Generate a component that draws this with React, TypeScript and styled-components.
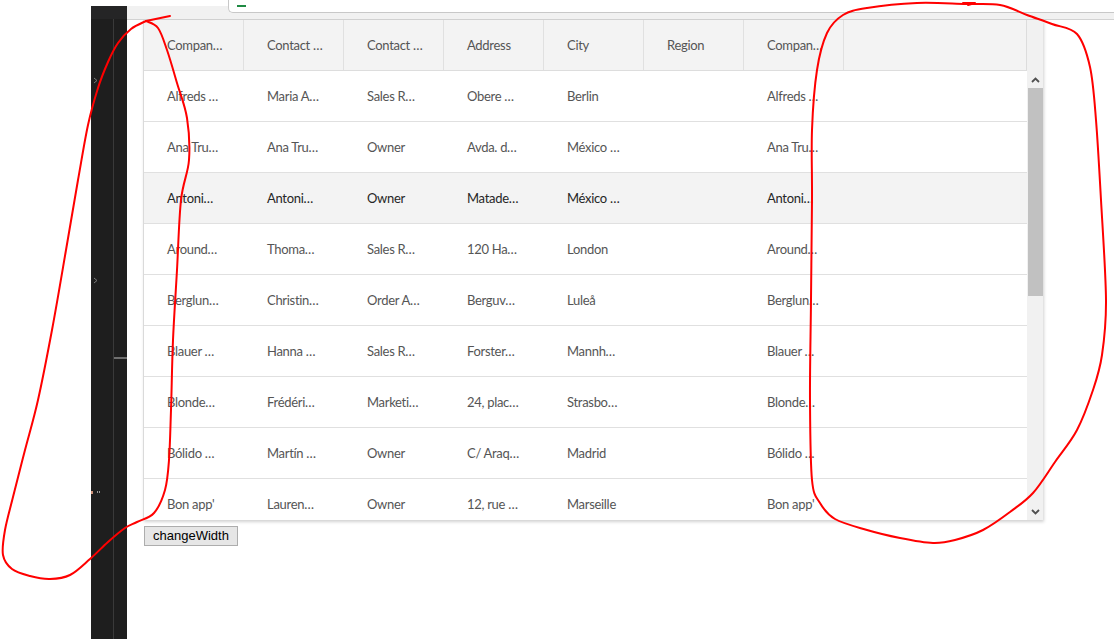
import type { FC } from "react";
import styled, { createGlobalStyle } from "styled-components";

type Point = [number, number];

const GlobalStyle = createGlobalStyle`
  html, body {
    margin: 0;
    padding: 0;
    background: #ffffff;
    overflow: hidden;
  }
`;

const columns = ["Compan…", "Contact …", "Contact …", "Address", "City", "Region", "Compan…"];

// visible (already truncated) cell texts, as the grid shows them
const rows: string[][] = [
  ["Alfreds …", "Maria A…", "Sales R…", "Obere …", "Berlin", "", "Alfreds …"],
  ["Ana Tru…", "Ana Tru…", "Owner", "Avda. d…", "México …", "", "Ana Tru…"],
  ["Antoni…", "Antoni…", "Owner", "Matade…", "México …", "", "Antoni…"],
  ["Around…", "Thoma…", "Sales R…", "120 Ha…", "London", "", "Around…"],
  ["Berglun…", "Christin…", "Order A…", "Berguv…", "Luleå", "", "Berglun…"],
  ["Blauer …", "Hanna …", "Sales R…", "Forster…", "Mannh…", "", "Blauer …"],
  ["Blonde…", "Frédéri…", "Marketi…", "24, plac…", "Strasbo…", "", "Blonde…"],
  ["Bólido …", "Martín …", "Owner", "C/ Araq…", "Madrid", "", "Bólido …"],
  ["Bon app'", "Lauren…", "Owner", "12, rue …", "Marseille", "", "Bon app'"],
];

const SELECTED_ROW = 2;

const Screen = styled.div`
  position: relative;
  display: flex;
  width: 1114px;
  height: 639px;
  padding-left: 91px;
  box-sizing: border-box;
  font-family: Lato, "Noto Sans", sans-serif;
`;

/* ---------- editor strip on the left ---------- */

const Editor = styled.aside`
  width: 36px;
  flex-shrink: 0;
  padding-top: 6px;
  display: flex;
  flex-direction: column;
`;

const EditorTabs = styled.div`
  height: 13px;
  background: #252526;
`;

const EditorBody = styled.div`
  flex: 1;
  display: flex;
  background: #1e1e1e;
`;

const Gutter = styled.div`
  width: 22px;
  border-right: 1px solid #3a3a3a;
  display: flex;
  flex-direction: column;
`;

const FoldMark = styled.svg<{ $gap: number }>`
  display: block;
  margin: ${(p) => p.$gap}px 0 0 2px;
`;

const CodeBits = styled.div`
  display: flex;
  gap: 4px;
  margin-top: 207px;
  align-items: flex-start;
`;

const OrangeBit = styled.span`
  width: 2px;
  height: 3px;
  background: #ce9178;
`;

const QuoteBit = styled.span`
  width: 3px;
  height: 2px;
  border-left: 1px solid #9a9a9a;
  border-right: 1px solid #9a9a9a;
  box-sizing: border-box;
`;

const Minimap = styled.div`
  flex: 1;
  display: flex;
  flex-direction: column;
`;

const MinimapSlider = styled.div`
  margin-top: 338px;
  height: 2px;
  background: #6f6f6f;
`;

/* ---------- browser ---------- */

const Browser = styled.main`
  flex: 1;
  min-width: 0;
  display: flex;
  flex-direction: column;
`;

const Chrome = styled.header`
  height: 20px;
  box-sizing: border-box;
  display: flex;
  align-items: flex-start;
  background: #f1f1f1;
  border-bottom: 1px solid #d2d2d2;
`;

const ChromeTabs = styled.div`
  width: 101px;
  height: 6px;
  background: #ffffff;
`;

const AddressBar = styled.div`
  flex: 1;
  height: 13px;
  box-sizing: border-box;
  background: #ffffff;
  border-left: 1px solid #c8c8c8;
  border-bottom: 1px solid #c8c8c8;
  border-bottom-left-radius: 5px;
  padding: 5px 0 0 8px;
`;

const Favicon = styled.span`
  display: block;
  width: 9px;
  height: 2px;
  background: #1f8a43;
`;

const Content = styled.div`
  flex: 1;
  padding-left: 16px;
  background: #ffffff;
`;

/* ---------- grid ---------- */

const Grid = styled.section`
  width: 900px;
  height: 500px;
  box-sizing: border-box;
  display: flex;
  background: #ffffff;
  border-left: 1px solid #dadada;
  box-shadow: 1px 2px 3px rgba(0, 0, 0, 0.18);
`;

const GridMain = styled.div`
  flex: 1;
  min-width: 0;
  display: flex;
  flex-direction: column;
`;

const HeaderRow = styled.div`
  display: flex;
  height: 51px;
  flex-shrink: 0;
  box-sizing: border-box;
  background: #f3f3f3;
  border-bottom: 1px solid #dddddd;
`;

const HeaderCell = styled.div`
  width: 100px;
  flex-shrink: 0;
  box-sizing: border-box;
  display: flex;
  align-items: center;
  padding-left: 23px;
  border-right: 1px solid #e0e0e0;
  font-size: 13px;
  letter-spacing: -0.3px;
  color: #555555;
  white-space: nowrap;
  overflow: hidden;
`;

const HeaderFill = styled.div`
  flex: 1;
  border-right: 1px solid #dcdcdc;
`;

const Body = styled.div`
  flex: 1;
  overflow: hidden;
`;

const Row = styled.div<{ $selected: boolean }>`
  display: flex;
  height: 51px;
  box-sizing: border-box;
  border-bottom: 1px solid #e0e0e0;
  background: ${(p) => (p.$selected ? "#f3f3f3" : "#ffffff")};
  color: ${(p) => (p.$selected ? "#262626" : "#555555")};
`;

const Cell = styled.div`
  width: 100px;
  flex-shrink: 0;
  box-sizing: border-box;
  display: flex;
  align-items: center;
  padding-left: 23px;
  font-size: 13px;
  letter-spacing: -0.3px;
  white-space: nowrap;
  overflow: hidden;
  text-overflow: ellipsis;
`;

const ScrollTrack = styled.div`
  width: 16px;
  flex-shrink: 0;
  display: flex;
  flex-direction: column;
  padding-top: 51px;
  box-sizing: border-box;
  background: #f1f1f1;
`;

const ScrollArrow = styled.div`
  height: 17px;
  display: flex;
  align-items: center;
  justify-content: center;
`;

const ScrollThumb = styled.div`
  height: 208px;
  margin-left: 1px;
  background: #c1c1c1;
`;

const ScrollRest = styled.div`
  flex: 1;
`;

const ChangeButton = styled.button`
  margin: 6px 0 0 1px;
  height: 20px;
  padding: 0 8px;
  box-sizing: border-box;
  border: 1px solid #adadad;
  border-radius: 0;
  background: #e6e6e6;
  font-family: "Liberation Sans", Arial, sans-serif;
  font-size: 13px;
  line-height: 16px;
  color: #000000;
`;

/* ---------- red pen marks drawn over the screenshot ---------- */

const Marks = styled.svg`
  position: absolute;
  left: 0;
  top: 0;
  pointer-events: none;
`;

// Catmull-Rom through the points, as cubic Bézier segments
const smooth = (pts: Point[], closed = false): string => {
  const n = pts.length;
  const get = (i: number): Point =>
    closed ? pts[(i + n) % n] : pts[Math.max(0, Math.min(n - 1, i))];
  const last = closed ? n : n - 1;
  let d = `M${pts[0][0]},${pts[0][1]}`;
  for (let i = 0; i < last; i++) {
    const p0 = get(i - 1);
    const p1 = get(i);
    const p2 = get(i + 1);
    const p3 = get(i + 2);
    const c1x = p1[0] + (p2[0] - p0[0]) / 6;
    const c1y = p1[1] + (p2[1] - p0[1]) / 6;
    const c2x = p2[0] - (p3[0] - p1[0]) / 6;
    const c2y = p2[1] - (p3[1] - p1[1]) / 6;
    d += ` C${c1x.toFixed(1)},${c1y.toFixed(1)} ${c2x.toFixed(1)},${c2y.toFixed(1)} ${p2[0]},${p2[1]}`;
  }
  return d;
};

const leftLoop: Point[] = [
  [146, 21], [158, 28], [167, 50], [177, 83], [187, 118], [189, 160], [181, 200],
  [177, 270], [173, 340], [171, 410], [169, 460], [165, 490], [154, 513], [137, 522],
  [125, 528], [108, 542], [90, 559], [70, 575], [50, 579], [30, 576], [12, 569],
  [3, 555], [5, 530], [13, 497], [25, 450], [38, 400], [52, 330], [66, 250],
  [78, 180], [88, 125], [98, 88], [108, 62], [118, 43], [131, 29], [146, 21],
];

const rightLoop: Point[] = [
  [843, 15], [867, 8], [917, 3], [966, 4], [1000, 5], [1027, 15], [1052, 24],
  [1077, 34], [1090, 67], [1096, 120], [1101, 200], [1106, 300], [1102, 355],
  [1093, 390], [1077, 430], [1055, 462], [1033, 493], [1010, 512], [983, 530],
  [955, 540], [933, 543], [900, 538], [867, 530], [835, 519], [820, 503],
  [812, 480], [810, 400], [811, 300], [812, 200], [812, 130], [817, 70], [827, 33],
];

const PenMarks: FC = () => (
  <Marks width={1114} height={639} viewBox="0 0 1114 639">
    <g fill="none" stroke="#ff0000" strokeWidth={2} strokeLinecap="round" strokeLinejoin="round">
      <path d="M170,16 L146,21" />
      <path d={smooth(leftLoop)} />
      <path d={smooth(rightLoop, true)} />
      <path d="M963,3 L975,3 L968,5" />
    </g>
  </Marks>
);

const Chevron: FC<{ up?: boolean }> = ({ up }) => (
  <svg width="9" height="6" viewBox="0 0 9 6">
    <polyline
      points={up ? "1,5 4.5,1.5 8,5" : "1,1 4.5,4.5 8,1"}
      fill="none"
      stroke="#505050"
      strokeWidth={1.8}
    />
  </svg>
);

const Fold: FC<{ gap: number }> = ({ gap }) => (
  <FoldMark $gap={gap} width="6" height="7" viewBox="0 0 6 7">
    <polyline points="1,1 4,3.5 1,6" fill="none" stroke="#7a7a7a" strokeWidth={1} />
  </FoldMark>
);

const App: FC = () => (
  <>
    <GlobalStyle />
    <Screen>
      <Editor>
        <EditorTabs />
        <EditorBody>
          <Gutter>
            <Fold gap={58} />
            <Fold gap={193} />
            <CodeBits>
              <OrangeBit />
              <QuoteBit />
            </CodeBits>
          </Gutter>
          <Minimap>
            <MinimapSlider />
          </Minimap>
        </EditorBody>
      </Editor>

      <Browser>
        <Chrome>
          <ChromeTabs />
          <AddressBar>
            <Favicon />
          </AddressBar>
        </Chrome>

        <Content>
          <Grid role="grid">
            <GridMain>
              <HeaderRow role="row">
                {columns.map((c, i) => (
                  <HeaderCell key={i} role="columnheader">
                    {c}
                  </HeaderCell>
                ))}
                <HeaderFill />
              </HeaderRow>
              <Body>
                {rows.map((r, i) => (
                  <Row key={i} role="row" $selected={i === SELECTED_ROW}>
                    {r.map((v, j) => (
                      <Cell key={j} role="gridcell">
                        {v}
                      </Cell>
                    ))}
                  </Row>
                ))}
              </Body>
            </GridMain>
            <ScrollTrack>
              <ScrollArrow>
                <Chevron up />
              </ScrollArrow>
              <ScrollThumb />
              <ScrollRest />
              <ScrollArrow>
                <Chevron />
              </ScrollArrow>
            </ScrollTrack>
          </Grid>
          <ChangeButton type="button">changeWidth</ChangeButton>
        </Content>
      </Browser>

      <PenMarks />
    </Screen>
  </>
);

export default App;
